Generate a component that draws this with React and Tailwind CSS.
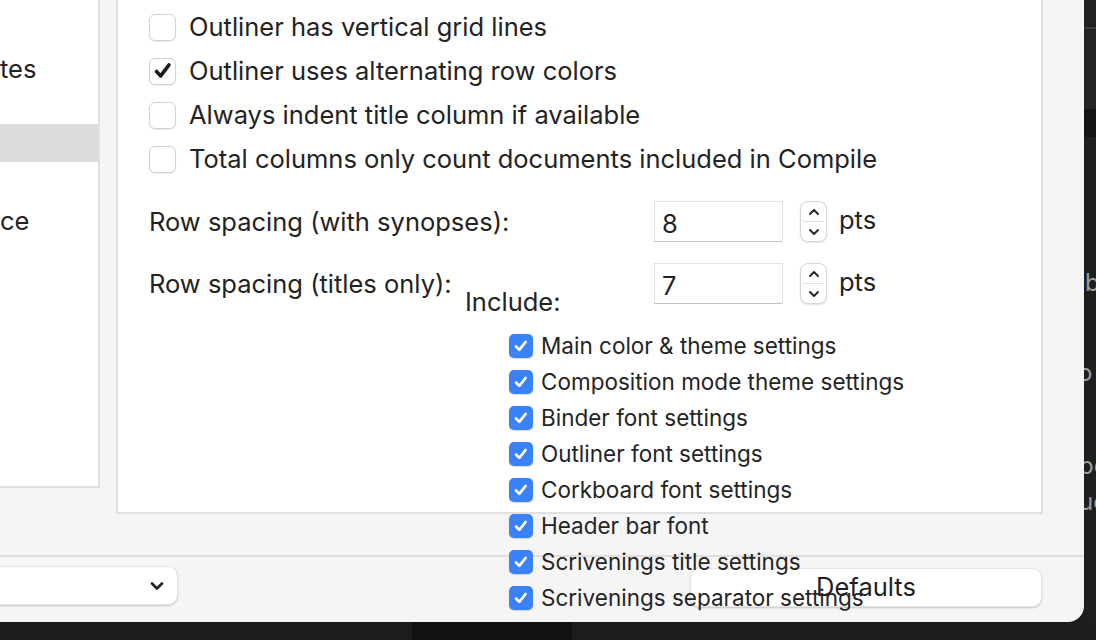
import React from "react";

const CheckBox = ({ checked }) => (
  <div className="w-[27px] h-[27px] rounded-[6px] bg-white border border-[#d2d2d2] shadow-[0_1px_1px_rgba(0,0,0,0.08)] flex items-center justify-center shrink-0">
    {checked && (
      <svg width="22" height="22" viewBox="0 0 22 22">
        <path d="M4.5 11.5l4.2 4.4 8.3-11" fill="none" stroke="#1c1c1c" strokeWidth="3.6" strokeLinecap="round" strokeLinejoin="round" />
      </svg>
    )}
  </div>
);

const BlueCheck = () => (
  <div className="w-[24px] h-[24px] rounded-[5px] bg-[#3a82f7] shadow-[0_1px_1px_rgba(0,0,0,0.15)] flex items-center justify-center shrink-0">
    <svg width="18" height="18" viewBox="0 0 18 18">
      <path d="M4 9.5l3.3 3.4 6.4-8" fill="none" stroke="#ffffff" strokeWidth="2.6" strokeLinecap="round" strokeLinejoin="round" />
    </svg>
  </div>
);

const Stepper = () => (
  <div className="w-[27px] h-[41px] rounded-[8px] bg-white border border-[#d6d6d6] shadow-[0_1px_2px_rgba(0,0,0,0.12)] flex flex-col">
    <div className="flex-1 flex items-center justify-center">
      <svg width="14" height="10" viewBox="0 0 14 10">
        <path d="M3 7l4-4 4 4" fill="none" stroke="#2a2a2a" strokeWidth="2" strokeLinecap="round" strokeLinejoin="round" />
      </svg>
    </div>
    <div className="h-px bg-[#e2e2e2] mx-[2px]" />
    <div className="flex-1 flex items-center justify-center">
      <svg width="14" height="10" viewBox="0 0 14 10">
        <path d="M3 3l4 4 4-4" fill="none" stroke="#2a2a2a" strokeWidth="2" strokeLinecap="round" strokeLinejoin="round" />
      </svg>
    </div>
  </div>
);

const options = [
  { label: "Outliner has vertical grid lines", checked: false },
  { label: "Outliner uses alternating row colors", checked: true },
  { label: "Always indent title column if available", checked: false },
  { label: "Total columns only count documents included in Compile", checked: false },
];

const includes = [
  "Main color & theme settings",
  "Composition mode theme settings",
  "Binder font settings",
  "Outliner font settings",
  "Corkboard font settings",
  "Header bar font",
  "Scrivenings title settings",
  "Scrivenings separator settings",
];

const SpacingRow = ({ label, value }) => (
  <div className="flex items-center h-[41px]">
    <div className="w-[505px] text-[25.5px] pt-[2px]">{label}</div>
    <div className="w-[129px] h-[41px] bg-white border border-[#e3e3e3] border-b-[#c4c4c4] flex items-center pl-[7px] text-[25.5px] pt-[5px]">
      {value}
    </div>
    <div className="ml-[17px]">
      <Stepper />
    </div>
    <div className="ml-[12px] text-[25.5px] -mt-[2px]">pts</div>
  </div>
);

export default function App() {
  return (
    <div className="w-[1096px] h-[640px] bg-[#1c1d1d] relative overflow-hidden font-['Inter',sans-serif] text-[#232323]">
      <div className="flex h-[622px]">
        <div className="w-[1084px] h-[622px] bg-[#f5f5f5] rounded-br-[16px] flex flex-col">
          <div className="flex h-[555px]">
            <div className="w-[100px] h-[488px] bg-white border-r-2 border-b-2 border-[#e0e0e0] pt-[50px] text-[25.5px]">
              <div className="h-[38px] flex items-center">tes</div>
              <div className="h-[38px] mt-[36px] bg-[#dcdcdc]" />
              <div className="h-[38px] mt-[40px] flex items-center">ce</div>
            </div>
            <div className="ml-[16px] w-[927px] h-[514px] bg-white border-x-2 border-b-2 border-[#e0e0e0] pl-[31px] pt-[5px]">
              {options.map((o) => (
                <div key={o.label} className="h-[44px] flex items-center">
                  <CheckBox checked={o.checked} />
                  <span className="ml-[13px] text-[25.5px] pt-[1px]">{o.label}</span>
                </div>
              ))}
              <div className="mt-[20px] flex flex-col gap-[21px]">
                <SpacingRow label="Row spacing (with synopses):" value="8" />
                <SpacingRow label="Row spacing (titles only):" value="7" />
              </div>
            </div>
          </div>
          <div className="h-[2px] bg-[#dedede]" />
          <div className="flex-1 flex items-start">
            <div className="-ml-[12px] mt-[9px] w-[190px] h-[39px] bg-white rounded-[10px] shadow-[0_1px_2px_rgba(0,0,0,0.2)] border border-[#e4e4e4] flex items-center justify-end pr-[12px]">
              <svg width="16" height="12" viewBox="0 0 16 12">
                <path d="M3 3.5l5 5 5-5" fill="none" stroke="#222" strokeWidth="2.6" strokeLinecap="round" strokeLinejoin="round" />
              </svg>
            </div>
            <div className="ml-auto mr-[42px] mt-[11px] w-[352px] h-[39px] bg-white rounded-[9px] shadow-[0_1px_2px_rgba(0,0,0,0.2)] border border-[#e4e4e4] flex items-center justify-center text-[25.5px] text-[#1e1e1e]">
              Defaults
            </div>
          </div>
        </div>
        <div className="flex-1 flex flex-col overflow-hidden">
          <div className="h-[27px] bg-[#202121]" />
          <div className="h-[2px] bg-[#3a3b3b]" />
          <div className="h-[80px] bg-[#222323]" />
          <div className="h-[28px] bg-[#131414]" />
          <div className="flex-1 bg-[#1e1f1f] relative text-[24px] leading-none text-[#9b9b9b]">
            <span className="absolute left-[1px] top-[134px]">b</span>
            <span className="absolute -left-[6px] top-[224px]">o</span>
            <span className="absolute -left-[5px] top-[317px]">pe</span>
            <span className="absolute -left-[5px] top-[353px]">ue</span>
          </div>
        </div>
      </div>
      <div className="flex h-[18px]">
        <div className="w-[412px] bg-[#1c1d1c]" />
        <div className="w-[160px] bg-[#111212]" />
        <div className="flex-1 bg-[#1c1d1d]" />
      </div>

      <div className="absolute left-[465px] top-[283px] text-[25.5px]">Include:</div>
      <div className="absolute left-[509px] top-[328px] flex flex-col">
        {includes.map((t) => (
          <div key={t} className="h-[36px] flex items-center">
            <BlueCheck />
            <span className="ml-[8px] text-[22.5px] text-[#242424]">{t}</span>
          </div>
        ))}
      </div>
    </div>
  );
}
